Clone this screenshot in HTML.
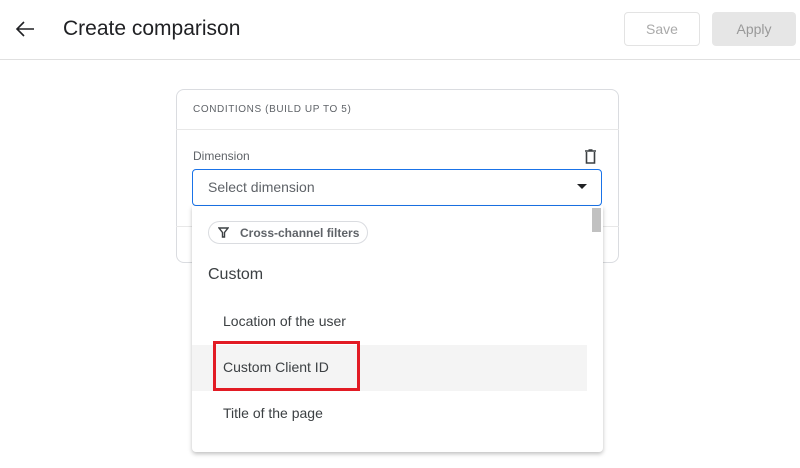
<!DOCTYPE html>
<html><head><style>
*{margin:0;padding:0;box-sizing:border-box}
body{width:800px;height:468px;background:#fff;font-family:"Liberation Sans",sans-serif;position:relative;overflow:hidden;color:#202124}
.a{position:absolute}
</style></head><body>
<svg class="a" style="left:15px;top:20px" width="20" height="18" viewBox="0 0 20 18"><path d="M19 9H2M9 2L2 9l7 7" stroke="#202124" stroke-width="1.6" fill="none"/></svg>
<div class="a" style="left:63px;top:17px;font-size:21px;color:#202124">Create comparison</div>
<div class="a" style="left:624px;top:12px;width:76px;height:34px;border:1px solid #e3e3e3;border-radius:4px;color:#aaa;font-size:14px;text-align:center;line-height:32px">Save</div>
<div class="a" style="left:712px;top:12px;width:84px;height:34px;background:#e6e6e6;border-radius:4px;color:#999;font-size:14px;text-align:center;line-height:34px">Apply</div>
<div class="a" style="left:0;top:59px;width:800px;height:1px;background:#e0e0e0"></div>
<div class="a" style="left:176px;top:89px;width:443px;height:174px;border:1px solid #dadce0;border-radius:8px"></div>
<div class="a" style="left:176px;top:129px;width:443px;height:1px;background:#e8e8e8"></div>
<div class="a" style="left:176px;top:226px;width:443px;height:1px;background:#e8e8e8"></div>
<div class="a" style="left:193px;top:104px;font-size:10px;letter-spacing:.6px;color:#5f6368">CONDITIONS (BUILD UP TO 5)</div>
<div class="a" style="left:193px;top:149px;font-size:12px;color:#5f6368">Dimension</div>
<svg class="a" style="left:584px;top:149px" width="13" height="15" viewBox="0 0 13 15"><path d="M1 2h11M4.5 1h4M2.5 3v11h8V3" stroke="#3c4043" stroke-width="1.6" fill="none"/></svg>
<div class="a" style="left:192px;top:169px;width:410px;height:37px;border:1.5px solid #1a73e8;border-radius:4px;background:#fff"></div>
<div class="a" style="left:208px;top:179px;font-size:14px;color:#5f6368">Select dimension</div>
<svg class="a" style="left:577px;top:184px" width="10" height="6"><path d="M0 0h10L5 5z" fill="#202124"/></svg>
<div class="a" style="left:192px;top:206px;width:411px;height:246px;background:#fff;box-shadow:0 2px 4px rgba(0,0,0,.25);border-radius:0 0 4px 4px"></div>
<div class="a" style="left:592px;top:208px;width:9px;height:24px;background:#c1c1c1"></div>
<div class="a" style="left:208px;top:221px;width:160px;height:23px;border:1px solid #dadce0;border-radius:12px"></div>
<svg class="a" style="left:218px;top:227px" width="11" height="11" viewBox="0 0 11 11"><path d="M1 1h9L6.5 5.5V10H4.5V5.5z" stroke="#3c4043" stroke-width="1.4" fill="none"/></svg>
<div class="a" style="left:240px;top:226px;font-size:12px;font-weight:bold;color:#5f6368">Cross-channel filters</div>
<div class="a" style="left:208px;top:266px;font-size:16px;color:#3c4043">Custom</div>
<div class="a" style="left:223px;top:313px;font-size:14px;color:#3c4043">Location of the user</div>
<div class="a" style="left:192px;top:345px;width:395px;height:46px;background:#f4f4f4"></div>
<div class="a" style="left:213px;top:341px;width:147px;height:50px;border:3px solid #e21b24"></div>
<div class="a" style="left:223px;top:359px;font-size:14px;color:#3c4043">Custom Client ID</div>
<div class="a" style="left:223px;top:405px;font-size:14px;color:#3c4043">Title of the page</div>
</body></html>
